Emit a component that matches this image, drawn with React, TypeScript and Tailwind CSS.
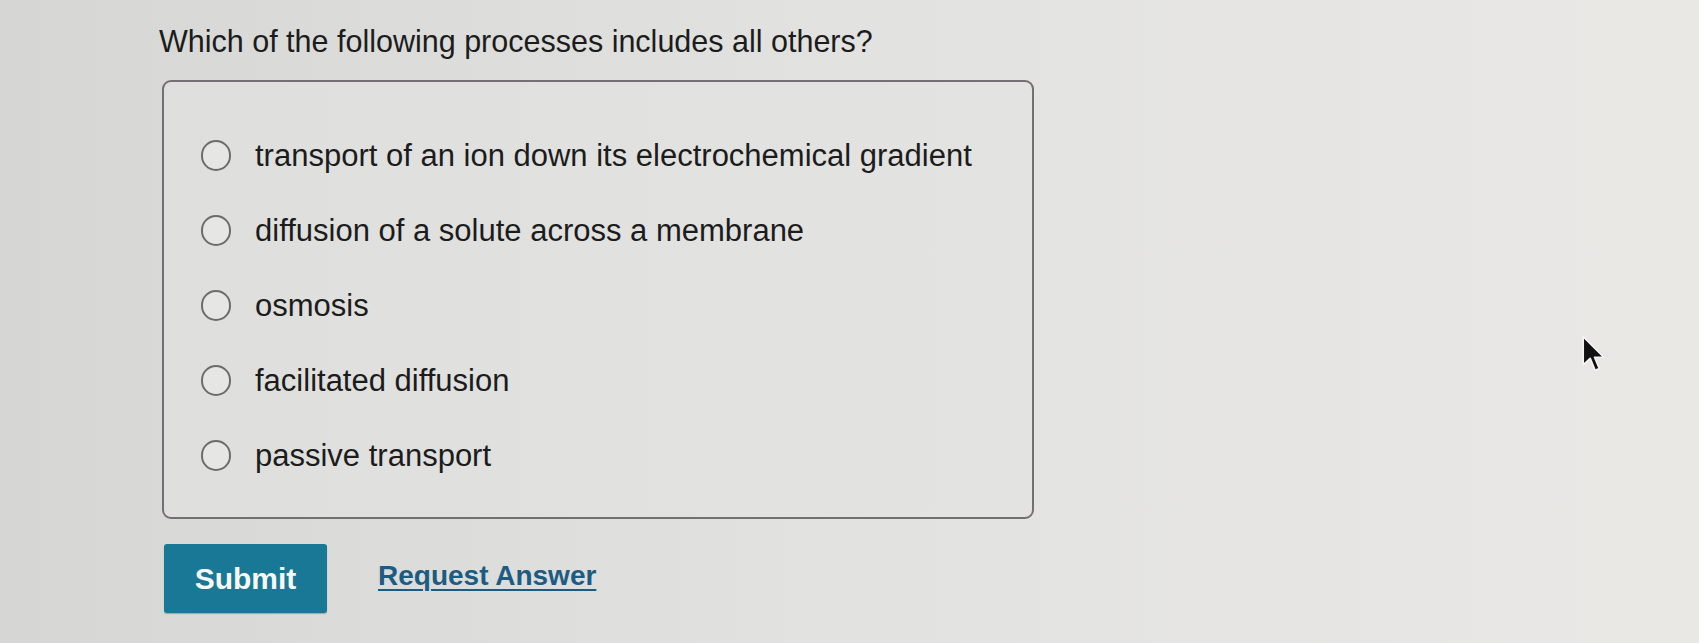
import React from "react";

const options = [
  "transport of an ion down its electrochemical gradient",
  "diffusion of a solute across a membrane",
  "osmosis",
  "facilitated diffusion",
  "passive transport",
];

function Pointer() {
  return (
    <svg width="26" height="40" viewBox="0 0 24 36" className="absolute left-[1581px] top-[334px]">
      <path
        d="M2 2 L2 28 L8.5 22 L13 33 L17 31.5 L12.5 21 L21 21 Z"
        fill="#111"
        stroke="#f4f4f4"
        strokeWidth="1.6"
        strokeLinejoin="round"
      />
    </svg>
  );
}

export default function App() {
  return (
    <div
      className="relative h-[643px] w-[1699px] overflow-hidden bg-linear-to-r from-[#d6d6d4] via-[#e2e2e0] to-[#e9e8e5] text-[#1c1c1c]"
      style={{ fontFamily: '"Liberation Sans", Arial, sans-serif' }}
    >
      <div className="pl-[159px] pt-[23px]">
        <h1 className="text-[30.5px] leading-[36px] font-normal">
          Which of the following processes includes all others?
        </h1>

        <div className="mt-[21px] ml-[3px] w-[872px] rounded-[9px] border-2 border-[#736f74] bg-[#e3e3e1]/60 pl-[37px] pt-[36px] pb-[24px]">
          {options.map((o) => (
            <label key={o} className="flex h-[75px] items-center">
              <span className="h-[31px] w-[30px] shrink-0 rounded-full border-2 border-[#6c6c6c] bg-[#e6e6e4]" />
              <span className="ml-[24px] text-[31px] leading-[36px]">{o}</span>
            </label>
          ))}
        </div>

        <div className="mt-[25px] ml-[5px] flex items-center">
          <button className="flex h-[69px] w-[163px] items-center justify-center rounded-[3px] bg-[#187896] text-[30px] font-bold text-[#f7f7f5] shadow-[0_1px_1px_rgba(0,0,0,0.25)]">
            Submit
          </button>
          <a className="ml-[51px] -mt-[6px] text-[28px] font-bold text-[#1d5c82] underline decoration-[2px] underline-offset-[4px]">
            Request Answer
          </a>
        </div>
      </div>
      <Pointer />
    </div>
  );
}
